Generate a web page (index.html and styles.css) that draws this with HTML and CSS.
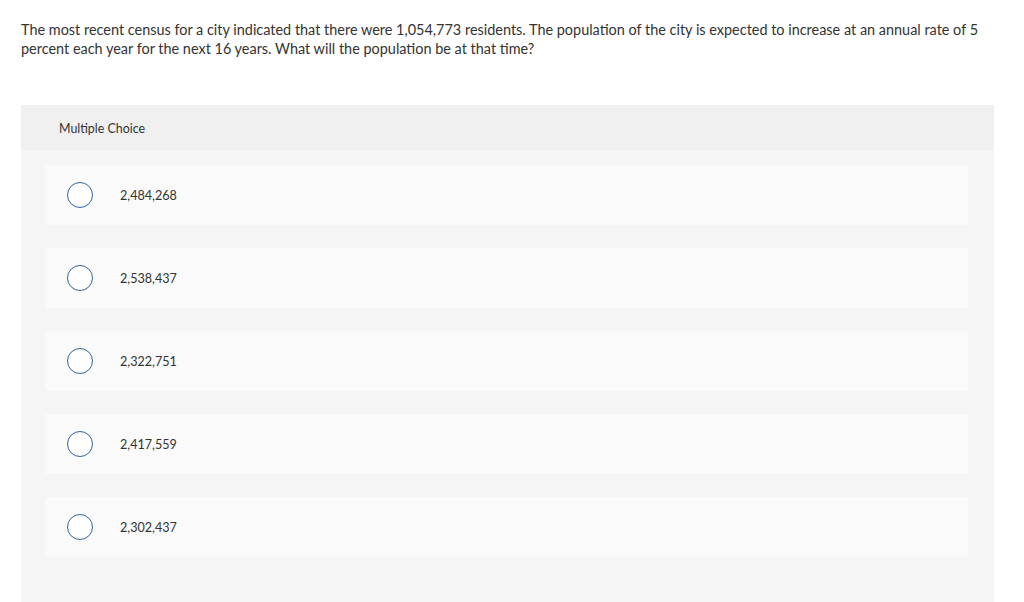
FILE: index.html
```html
<!DOCTYPE html>
<html>
<head>
<meta charset="utf-8">
<link rel="stylesheet" href="styles.css">
</head>
<body>
<div class="question">The most recent census for a city indicated that there were 1,054,773 residents. The population of the city is expected to increase at an annual rate of 5 percent each year for the next 16 years. What will the population be at that time?</div>
<div class="panel">
  <div class="panel-head">Multiple Choice</div>
  <div class="options">
    <div class="option"><span class="radio"></span><span class="label">2,484,268</span></div>
    <div class="option"><span class="radio"></span><span class="label">2,538,437</span></div>
    <div class="option"><span class="radio"></span><span class="label">2,322,751</span></div>
    <div class="option"><span class="radio"></span><span class="label">2,417,559</span></div>
    <div class="option"><span class="radio"></span><span class="label">2,302,437</span></div>
  </div>
</div>
</body>
</html>
```
FILE: styles.css
```css
html, body {
  margin: 0;
  padding: 0;
  background: #ffffff;
}
body {
  font-family: Lato, "Liberation Sans", sans-serif;
  color: #333333;
}
.question {
  padding: 20px 30px 0 21px;
  font-size: 14.45px;
  line-height: 19px;
  height: 85px;
}
.panel {
  margin-left: 21px;
  width: 973px;
  background: #f5f5f5;
  height: 497px;
}
.panel-head {
  background: #f0f0f0;
  height: 45px;
  display: flex;
  align-items: center;
  padding-left: 38px;
  padding-top: 1px;
  box-sizing: border-box;
  font-size: 12.4px;
}
.options {
  display: flex;
  flex-direction: column;
  gap: 23px;
  padding: 15px 26px 0 24px;
}
.option {
  height: 60px;
  background: #fafafa;
  border-radius: 3px;
  display: flex;
  align-items: center;
  padding-left: 22px;
}
.radio {
  width: 24px;
  height: 24px;
  border: 1px solid #30659c;
  border-radius: 50%;
  background: #ffffff;
  flex: none;
}
.label {
  margin-left: 27px;
  font-size: 12.6px;
  line-height: 14px;
  margin-top: 1px;
}
```
